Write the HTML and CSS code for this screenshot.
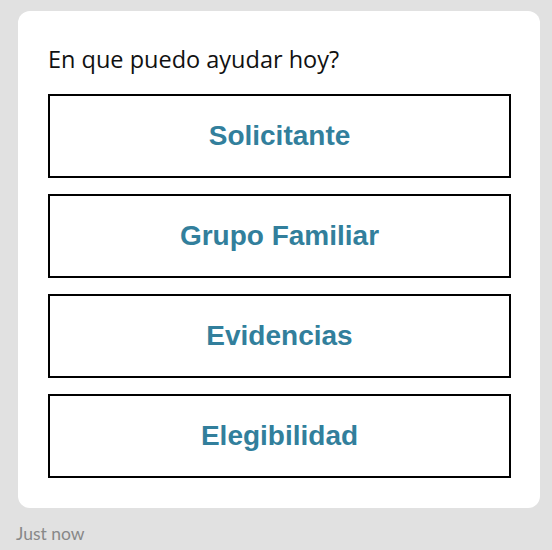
FILE: index.html
```html
<!DOCTYPE html>
<html lang="es">
<head>
<meta charset="utf-8">
<link rel="stylesheet" href="styles.css">
</head>
<body>
<div class="wrap">
  <div class="card">
    <p class="prompt">En que puedo ayudar hoy?</p>
    <div class="options">
      <button class="opt">Solicitante</button>
      <button class="opt">Grupo Familiar</button>
      <button class="opt">Evidencias</button>
      <button class="opt">Elegibilidad</button>
    </div>
  </div>
  <div class="time">Just now</div>
</div>
</body>
</html>
```
FILE: styles.css
```css
html, body {
  margin: 0;
  padding: 0;
  background: #e1e1e1;
}
.wrap {
  padding: 11px 12px 0 18px;
}
.card {
  background: #fff;
  border-radius: 12px;
  padding: 33px 29px 30px 30px;
}
.prompt {
  margin: 0 0 20px 0;
  font-family: "Open Sans", "Noto Sans", sans-serif;
  font-size: 23.5px;
  line-height: 30px;
  color: #111;
}
.options {
  display: flex;
  flex-direction: column;
  gap: 16px;
}
.opt {
  display: block;
  width: 100%;
  height: 84px;
  margin: 0;
  background: #fff;
  border: 2px solid #000;
  font-family: "Liberation Sans", Arial, sans-serif;
  font-weight: bold;
  font-size: 28px;
  color: #327f9c;
  cursor: pointer;
}
.time {
  font-family: Lato, "Open Sans", sans-serif;
  font-size: 17.5px;
  color: #888;
  padding: 15px 0 0 0;
  margin-left: -2px;
}
```
